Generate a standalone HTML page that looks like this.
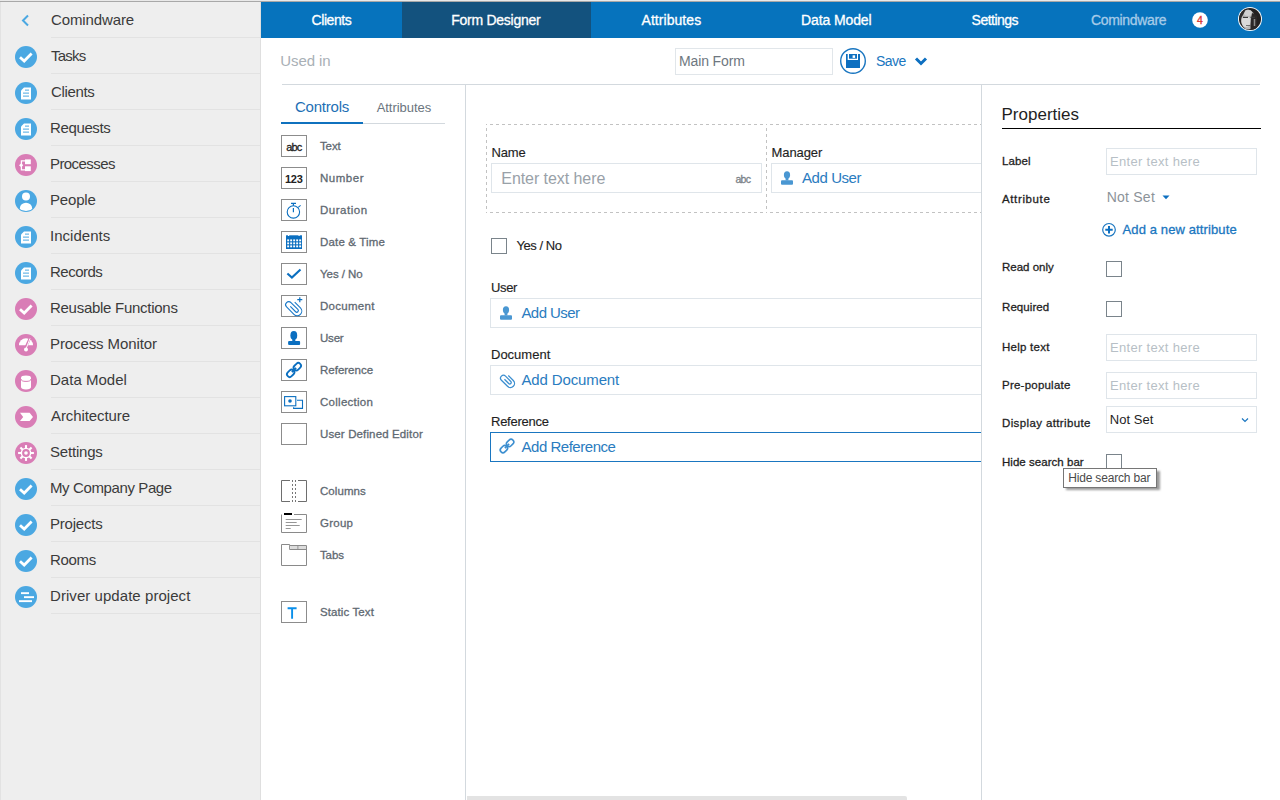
<!DOCTYPE html>
<html><head><meta charset="utf-8"><style>
html,body{margin:0;padding:0;width:1280px;height:800px;overflow:hidden;background:#fff}
body{position:relative;font-family:"Liberation Sans", sans-serif}
.t{position:absolute;line-height:1;white-space:nowrap}
svg{overflow:visible}
</style></head><body>
<div style="position:absolute;left:0px;top:0px;width:1280px;height:800px;background:#ffffff"></div>
<div style="position:absolute;left:0px;top:0px;width:261px;height:800px;background:#eeeeee"></div>
<div style="position:absolute;left:0px;top:0px;width:1px;height:800px;background:#e2e2e2"></div>
<div style="position:absolute;left:260px;top:0px;width:1px;height:800px;background:#dfdfdf"></div>
<div style="position:absolute;left:0px;top:0px;width:1280px;height:1px;background:#e9e9e9"></div>
<div style="position:absolute;left:0px;top:1px;width:1280px;height:1px;background:#a8a8a8"></div>
<svg style="position:absolute;left:18px;top:12px;" width="14" height="16" viewBox="0 0 14 16"><polyline points="10,3.5 5,8.5 10,13.5" fill="none" stroke="#4ba8e2" stroke-width="2"/></svg>
<svg style="position:absolute;left:15px;top:45.8px;" width="22" height="22" viewBox="0 0 22 22"><circle cx="11" cy="11" r="11" fill="#4ba8e2"/><polyline points="5,11.2 9.2,15 16.6,7.6" fill="none" stroke="#ffffff" stroke-width="2.8" stroke-linecap="butt"/></svg>
<svg style="position:absolute;left:15px;top:81.8px;" width="22" height="22" viewBox="0 0 22 22"><circle cx="11" cy="11" r="11" fill="#4ba8e2"/><path d="M9,5.5 H16 V17.5 H6 V8.5 Z" fill="#ffffff"/><rect x="10" y="7.6" width="4" height="1" fill="#4ba8e2"/><rect x="8" y="10.6" width="6" height="1" fill="#4ba8e2"/><rect x="8" y="13.6" width="6" height="1" fill="#4ba8e2"/></svg>
<svg style="position:absolute;left:15px;top:117.8px;" width="22" height="22" viewBox="0 0 22 22"><circle cx="11" cy="11" r="11" fill="#4ba8e2"/><path d="M9,5.5 H16 V17.5 H6 V8.5 Z" fill="#ffffff"/><rect x="10" y="7.6" width="4" height="1" fill="#4ba8e2"/><rect x="8" y="10.6" width="6" height="1" fill="#4ba8e2"/><rect x="8" y="13.6" width="6" height="1" fill="#4ba8e2"/></svg>
<svg style="position:absolute;left:15px;top:153.8px;" width="22" height="22" viewBox="0 0 22 22"><circle cx="11" cy="11" r="11" fill="#d97db6"/><rect x="10" y="5.4" width="5.8" height="4.8" fill="#ffffff"/><rect x="10" y="12.3" width="5.8" height="4.8" fill="#ffffff"/><path d="M10,6.8 H6.4 V15.8 H10" fill="none" stroke="#ffffff" stroke-width="1.3"/><path d="M4,11.2 L6.4,9.2 L8.2,11.2 L6.4,13.2 Z" fill="#ffffff"/></svg>
<svg style="position:absolute;left:15px;top:189.8px;" width="22" height="22" viewBox="0 0 22 22"><circle cx="11" cy="11" r="11" fill="#4ba8e2"/><circle cx="11" cy="6.4" r="4" fill="#ffffff"/><clipPath id="pc"><circle cx="11" cy="11" r="10.1"/></clipPath><ellipse cx="11" cy="18.3" rx="6.1" ry="5.6" fill="#ffffff" clip-path="url(#pc)"/></svg>
<svg style="position:absolute;left:15px;top:225.8px;" width="22" height="22" viewBox="0 0 22 22"><circle cx="11" cy="11" r="11" fill="#4ba8e2"/><path d="M9,5.5 H16 V17.5 H6 V8.5 Z" fill="#ffffff"/><rect x="10" y="7.6" width="4" height="1" fill="#4ba8e2"/><rect x="8" y="10.6" width="6" height="1" fill="#4ba8e2"/><rect x="8" y="13.6" width="6" height="1" fill="#4ba8e2"/></svg>
<svg style="position:absolute;left:15px;top:261.8px;" width="22" height="22" viewBox="0 0 22 22"><circle cx="11" cy="11" r="11" fill="#4ba8e2"/><path d="M9,5.5 H16 V17.5 H6 V8.5 Z" fill="#ffffff"/><rect x="10" y="7.6" width="4" height="1" fill="#4ba8e2"/><rect x="8" y="10.6" width="6" height="1" fill="#4ba8e2"/><rect x="8" y="13.6" width="6" height="1" fill="#4ba8e2"/></svg>
<svg style="position:absolute;left:15px;top:297.8px;" width="22" height="22" viewBox="0 0 22 22"><circle cx="11" cy="11" r="11" fill="#d97db6"/><polyline points="5,11.2 9.2,15 16.6,7.6" fill="none" stroke="#ffffff" stroke-width="2.8" stroke-linecap="butt"/></svg>
<svg style="position:absolute;left:15px;top:333.8px;" width="22" height="22" viewBox="0 0 22 22"><circle cx="11" cy="11" r="11" fill="#d97db6"/><path d="M4,11.3 A7,7 0 0 1 18,11.3 Z" fill="#ffffff"/><path d="M10.2,14.5 L15.2,3.5" stroke="#d97db6" stroke-width="2.4"/><path d="M11,15 L15,4.5" stroke="#ffffff" stroke-width="1"/><circle cx="11" cy="15.5" r="2" fill="#ffffff"/></svg>
<svg style="position:absolute;left:15px;top:369.8px;" width="22" height="22" viewBox="0 0 22 22"><circle cx="11" cy="11" r="11" fill="#d97db6"/><path d="M6,8 A5,2.4 0 0 1 16,8 V17 A5,2.4 0 0 1 6,17 Z" fill="#ffffff"/><path d="M6,9 A5,2.4 0 0 0 16,9" fill="none" stroke="#d97db6" stroke-width="1"/></svg>
<svg style="position:absolute;left:15px;top:405.8px;" width="22" height="22" viewBox="0 0 22 22"><circle cx="11" cy="11" r="11" fill="#d97db6"/><path d="M5,6.8 H14.6 L18,10.9 L14.6,15 H5 L8.2,10.9 Z" fill="#ffffff"/></svg>
<svg style="position:absolute;left:15px;top:441.8px;" width="22" height="22" viewBox="0 0 22 22"><circle cx="11" cy="11" r="11" fill="#d97db6"/><rect x="9.95" y="3.1" width="2.1" height="4" fill="#ffffff" transform="rotate(0 11 11)"/><rect x="9.95" y="3.1" width="2.1" height="4" fill="#ffffff" transform="rotate(45 11 11)"/><rect x="9.95" y="3.1" width="2.1" height="4" fill="#ffffff" transform="rotate(90 11 11)"/><rect x="9.95" y="3.1" width="2.1" height="4" fill="#ffffff" transform="rotate(135 11 11)"/><rect x="9.95" y="3.1" width="2.1" height="4" fill="#ffffff" transform="rotate(180 11 11)"/><rect x="9.95" y="3.1" width="2.1" height="4" fill="#ffffff" transform="rotate(225 11 11)"/><rect x="9.95" y="3.1" width="2.1" height="4" fill="#ffffff" transform="rotate(270 11 11)"/><rect x="9.95" y="3.1" width="2.1" height="4" fill="#ffffff" transform="rotate(315 11 11)"/><circle cx="11" cy="11" r="5.3" fill="#ffffff"/><circle cx="11" cy="11" r="3.9" fill="#d97db6"/><circle cx="11" cy="11" r="1.8" fill="#ffffff"/></svg>
<svg style="position:absolute;left:15px;top:477.8px;" width="22" height="22" viewBox="0 0 22 22"><circle cx="11" cy="11" r="11" fill="#4ba8e2"/><polyline points="5,11.2 9.2,15 16.6,7.6" fill="none" stroke="#ffffff" stroke-width="2.8" stroke-linecap="butt"/></svg>
<svg style="position:absolute;left:15px;top:513.8px;" width="22" height="22" viewBox="0 0 22 22"><circle cx="11" cy="11" r="11" fill="#4ba8e2"/><polyline points="5,11.2 9.2,15 16.6,7.6" fill="none" stroke="#ffffff" stroke-width="2.8" stroke-linecap="butt"/></svg>
<svg style="position:absolute;left:15px;top:549.8px;" width="22" height="22" viewBox="0 0 22 22"><circle cx="11" cy="11" r="11" fill="#4ba8e2"/><polyline points="5,11.2 9.2,15 16.6,7.6" fill="none" stroke="#ffffff" stroke-width="2.8" stroke-linecap="butt"/></svg>
<svg style="position:absolute;left:15px;top:585.8px;" width="22" height="22" viewBox="0 0 22 22"><circle cx="11" cy="11" r="11" fill="#4ba8e2"/><rect x="6" y="6.2" width="8" height="1.9" fill="#ffffff"/><rect x="9" y="10.2" width="10" height="1.9" fill="#ffffff"/><rect x="4" y="14.2" width="13" height="1.9" fill="#ffffff"/></svg>
<div style="position:absolute;left:51px;top:37px;width:209px;height:1px;background:#e2e2e2"></div>
<div style="position:absolute;left:51px;top:73px;width:209px;height:1px;background:#e2e2e2"></div>
<div style="position:absolute;left:51px;top:109px;width:209px;height:1px;background:#e2e2e2"></div>
<div style="position:absolute;left:51px;top:145px;width:209px;height:1px;background:#e2e2e2"></div>
<div style="position:absolute;left:51px;top:181px;width:209px;height:1px;background:#e2e2e2"></div>
<div style="position:absolute;left:51px;top:217px;width:209px;height:1px;background:#e2e2e2"></div>
<div style="position:absolute;left:51px;top:253px;width:209px;height:1px;background:#e2e2e2"></div>
<div style="position:absolute;left:51px;top:289px;width:209px;height:1px;background:#e2e2e2"></div>
<div style="position:absolute;left:51px;top:325px;width:209px;height:1px;background:#e2e2e2"></div>
<div style="position:absolute;left:51px;top:361px;width:209px;height:1px;background:#e2e2e2"></div>
<div style="position:absolute;left:51px;top:397px;width:209px;height:1px;background:#e2e2e2"></div>
<div style="position:absolute;left:51px;top:433px;width:209px;height:1px;background:#e2e2e2"></div>
<div style="position:absolute;left:51px;top:469px;width:209px;height:1px;background:#e2e2e2"></div>
<div style="position:absolute;left:51px;top:505px;width:209px;height:1px;background:#e2e2e2"></div>
<div style="position:absolute;left:51px;top:541px;width:209px;height:1px;background:#e2e2e2"></div>
<div style="position:absolute;left:51px;top:577px;width:209px;height:1px;background:#e2e2e2"></div>
<div style="position:absolute;left:51px;top:613px;width:209px;height:1px;background:#e2e2e2"></div>
<div style="position:absolute;left:261px;top:2px;width:1019px;height:36px;background:#0673bd"></div>
<div style="position:absolute;left:402px;top:2px;width:189px;height:36px;background:#13527e"></div>
<svg style="position:absolute;left:1192px;top:12.3px;" width="16" height="16" viewBox="0 0 16 16"><circle cx="8" cy="8" r="7.8" fill="#fff"/><text x="8" y="11.8" text-anchor="middle" font-family="Liberation Sans" font-size="10.5" stroke="#d9302c" stroke-width="0.3" fill="#d9302c">4</text></svg>
<svg style="position:absolute;left:1238px;top:7px;" width="24" height="24" viewBox="0 0 24 24"><clipPath id="avc"><circle cx="12" cy="12" r="11"/></clipPath><circle cx="12" cy="12" r="12" fill="#f4f8fb"/><circle cx="12" cy="12" r="11" fill="#232020"/><g clip-path="url(#avc)"><ellipse cx="10" cy="12.5" rx="7" ry="10" fill="#b9b9b9"/><ellipse cx="8" cy="14.5" rx="4.5" ry="5.5" fill="#dadada"/><ellipse cx="10" cy="6" rx="4" ry="3" fill="#d0d0d0"/><path d="M14,6 Q17,7 19,9 L19,24 L13,24 Q11.5,18 14,6 Z" fill="#2b2727"/><path d="M1,9 Q2,3 8,2 L5,8 Q3,10 3,14 Z" fill="#2f2d2d"/><path d="M5,10.3 H10 M12.5,10.3 H17" stroke="#3a3a3a" stroke-width="1.3"/><path d="M16.5,12 V19" stroke="#8a8a8a" stroke-width="1.5"/><path d="M8,18.5 H12" stroke="#555" stroke-width="0.8"/></g></svg>
<div style="position:absolute;left:675px;top:48px;width:158px;height:27px;border:1px solid #e1e6ea;box-sizing:border-box"></div>
<svg style="position:absolute;left:839px;top:47px;" width="28" height="28" viewBox="0 0 28 28"><circle cx="14" cy="14" r="12.3" fill="none" stroke="#1a76c0" stroke-width="1.4"/><rect x="7" y="7" width="14" height="14" fill="#0d6fc0"/><rect x="8.7" y="7" width="10.3" height="6" fill="#fff"/><rect x="10" y="7" width="8" height="4.7" fill="#0d6fc0"/><rect x="13.6" y="8.3" width="2.5" height="2.6" fill="#fff"/></svg>
<svg style="position:absolute;left:913px;top:55px;" width="16" height="12" viewBox="0 0 16 12"><polyline points="3,3.5 8,8.5 13,3.5" fill="none" stroke="#0d6fc0" stroke-width="3"/></svg>
<div style="position:absolute;left:282px;top:84px;width:978px;height:1px;background:#d3d9de"></div>
<div style="position:absolute;left:465px;top:85px;width:1px;height:715px;background:#d3d9de"></div>
<div style="position:absolute;left:981px;top:85px;width:1px;height:715px;background:#d3d9de"></div>
<div style="position:absolute;left:281px;top:122px;width:82px;height:2px;background:#0f71be"></div>
<div style="position:absolute;left:363px;top:123px;width:82px;height:1px;background:#d3d9de"></div>
<div style="position:absolute;left:281px;top:135px;width:26px;height:22px;border:1px solid #8c8c8c;box-sizing:border-box"></div>
<div style="position:absolute;left:281px;top:167px;width:26px;height:22px;border:1px solid #8c8c8c;box-sizing:border-box"></div>
<div style="position:absolute;left:281px;top:199px;width:26px;height:22px;border:1px solid #8c8c8c;box-sizing:border-box"></div>
<div style="position:absolute;left:281px;top:231px;width:26px;height:22px;border:1px solid #8c8c8c;box-sizing:border-box"></div>
<div style="position:absolute;left:281px;top:263px;width:26px;height:22px;border:1px solid #8c8c8c;box-sizing:border-box"></div>
<div style="position:absolute;left:281px;top:295px;width:26px;height:22px;border:1px solid #8c8c8c;box-sizing:border-box"></div>
<div style="position:absolute;left:281px;top:327px;width:26px;height:22px;border:1px solid #8c8c8c;box-sizing:border-box"></div>
<div style="position:absolute;left:281px;top:359px;width:26px;height:22px;border:1px solid #8c8c8c;box-sizing:border-box"></div>
<div style="position:absolute;left:281px;top:391px;width:26px;height:22px;border:1px solid #8c8c8c;box-sizing:border-box"></div>
<div style="position:absolute;left:281px;top:423px;width:26px;height:22px;border:1px solid #8c8c8c;box-sizing:border-box"></div>
<svg style="position:absolute;left:281px;top:199px;" width="26" height="22" viewBox="0 0 26 22"><circle cx="12.4" cy="12.9" r="6.2" fill="none" stroke="#0b6fc0" stroke-width="1.1"/><path d="M10,4.4 H15 M12.4,4.4 V6.7 M12.4,9 V13.3" stroke="#0b6fc0" stroke-width="1.2" fill="none"/><path d="M17.2,8.3 L19.6,6.3" stroke="#0b6fc0" stroke-width="1.1"/></svg>
<svg style="position:absolute;left:281px;top:231px;" width="26" height="22" viewBox="0 0 26 22"><rect x="5" y="4.3" width="16" height="13.7" fill="#0b6fc0"/><rect x="7" y="2.5" width="1.2" height="2.5" fill="#fff"/><rect x="17.5" y="2.5" width="1.2" height="2.5" fill="#fff"/><rect x="6.2" y="8.4" width="1.9" height="1.9" fill="#fff"/><rect x="6.2" y="11.4" width="1.9" height="1.9" fill="#fff"/><rect x="6.2" y="14.4" width="1.9" height="1.9" fill="#fff"/><rect x="9.2" y="8.4" width="1.9" height="1.9" fill="#fff"/><rect x="9.2" y="11.4" width="1.9" height="1.9" fill="#fff"/><rect x="9.2" y="14.4" width="1.9" height="1.9" fill="#fff"/><rect x="12.2" y="8.4" width="1.9" height="1.9" fill="#fff"/><rect x="12.2" y="11.4" width="1.9" height="1.9" fill="#fff"/><rect x="12.2" y="14.4" width="1.9" height="1.9" fill="#fff"/><rect x="15.2" y="8.4" width="1.9" height="1.9" fill="#fff"/><rect x="15.2" y="11.4" width="1.9" height="1.9" fill="#fff"/><rect x="15.2" y="14.4" width="1.9" height="1.9" fill="#fff"/><rect x="18.2" y="8.4" width="1.9" height="1.9" fill="#fff"/><rect x="18.2" y="11.4" width="1.9" height="1.9" fill="#fff"/><rect x="18.2" y="14.4" width="1.9" height="1.9" fill="#fff"/></svg>
<svg style="position:absolute;left:281px;top:263px;" width="26" height="22" viewBox="0 0 26 22"><polyline points="6.4,10.5 10.9,14.5 19.5,6.4" fill="none" stroke="#0b6fc0" stroke-width="2.1"/></svg>
<svg style="position:absolute;left:281px;top:295px;" width="26" height="22" viewBox="0 0 26 22"><g transform="rotate(-45 12.5 12.5)"><path d="M11,9.5 V17 A1.6,1.6 0 0 0 14.2,17 V7.2 A3.1,3.1 0 0 0 8,7.2 V17.6 A4.6,4.6 0 0 0 17.2,17.6 V9.5" fill="none" stroke="#1978c8" stroke-width="1.1"/></g><path d="M16.3,4.7 H21.3 M18.8,2.2 V7.2" stroke="#0b6fc0" stroke-width="1.2"/></svg>
<svg style="position:absolute;left:281px;top:327px;" width="26" height="22" viewBox="0 0 26 22"><ellipse cx="12.8" cy="8.5" rx="3.4" ry="4.4" fill="#0b6fc0"/><rect x="11.3" y="11" width="3" height="3.5" fill="#0b6fc0"/><rect x="7.1" y="14" width="12" height="4" rx="1" fill="#0b6fc0"/></svg>
<svg style="position:absolute;left:281px;top:359px;" width="26" height="22" viewBox="0 0 26 22"><g transform="rotate(-45 13 11)" fill="none" stroke="#0b6fc0" stroke-width="1.8"><rect x="4.2" y="8.3" width="8.2" height="5.4" rx="2.7"/><rect x="13.6" y="8.3" width="8.2" height="5.4" rx="2.7"/><path d="M10,11 H16"/></g></svg>
<svg style="position:absolute;left:281px;top:391px;" width="26" height="22" viewBox="0 0 26 22"><rect x="3.6" y="5.6" width="11.2" height="9.2" fill="none" stroke="#0b6fc0" stroke-width="1.1"/><circle cx="9" cy="10" r="1.8" fill="#0b6fc0"/><path d="M16,9.3 H21.5 V17.4 H12.6 V16.2" fill="none" stroke="#0b6fc0" stroke-width="1.1"/></svg>
<svg style="position:absolute;left:281px;top:479px;" width="26" height="24" viewBox="0 0 26 24"><path d="M9,1.5 H0.5 V22.5 H9 M17,1.5 H25.5 V22.5 H17" fill="none" stroke="#6e6e6e" stroke-width="1"/><path d="M11.5,1 V23 M14.5,1 V23" stroke="#777" stroke-width="1" stroke-dasharray="2,2"/></svg>
<svg style="position:absolute;left:281px;top:512px;" width="26" height="22" viewBox="0 0 26 22"><rect x="3" y="1" width="8" height="2" fill="#000"/><path d="M0.5,2.5 V20.5 H25.5 V2.5 H13" fill="none" stroke="#8a8a8a" stroke-width="1"/><path d="M4.7,7.5 H20.7 M4.7,10.5 H15.7 M4.7,13.5 H18.7 M4.7,16.5 H9.7" stroke="#8a8a8a" stroke-width="0.9"/></svg>
<svg style="position:absolute;left:281px;top:543px;" width="26" height="24" viewBox="0 0 26 24"><path d="M8.6,2.5 V1.5 H0.5 V22.5 H25.5 V2.5 H8.6 V6.5" fill="none" stroke="#8a8a8a" stroke-width="1"/><rect x="9.2" y="3" width="7.4" height="3" fill="#dcdcdc"/><rect x="17.2" y="3" width="7.8" height="3" fill="#dcdcdc"/><path d="M8.6,6.5 H25.5 M16.9,2.5 V6.5" stroke="#8a8a8a" stroke-width="1"/></svg>
<div style="position:absolute;left:281px;top:601px;width:26px;height:22px;border:1px solid #8c8c8c;box-sizing:border-box"></div>
<svg style="position:absolute;left:281px;top:601px;" width="26" height="22" viewBox="0 0 26 22"><path d="M6.6,7.2 H15.6 M11.1,7.2 V17.7" stroke="#0a8fea" stroke-width="1.9" fill="none"/></svg>
<div style="position:absolute;left:486px;top:124px;width:280px;height:1px;background:repeating-linear-gradient(90deg,#c2c2c2 0 1px,transparent 1px 4px,#c2c2c2 4px 6px)"></div>
<div style="position:absolute;left:766px;top:124px;width:215px;height:1px;background:repeating-linear-gradient(90deg,#c2c2c2 0 1px,transparent 1px 4px,#c2c2c2 4px 6px)"></div>
<div style="position:absolute;left:486px;top:212px;width:280px;height:1px;background:repeating-linear-gradient(90deg,#c2c2c2 0 1px,transparent 1px 4px,#c2c2c2 4px 6px)"></div>
<div style="position:absolute;left:766px;top:212px;width:215px;height:1px;background:repeating-linear-gradient(90deg,#c2c2c2 0 1px,transparent 1px 4px,#c2c2c2 4px 6px)"></div>
<div style="position:absolute;left:486px;top:124px;width:1px;height:89px;background:repeating-linear-gradient(180deg,#c2c2c2 0 1px,transparent 1px 4px,#c2c2c2 4px 6px)"></div>
<div style="position:absolute;left:766px;top:124px;width:1px;height:89px;background:repeating-linear-gradient(180deg,#c2c2c2 0 1px,transparent 1px 4px,#c2c2c2 4px 6px)"></div>
<div style="position:absolute;left:491px;top:163px;width:271px;height:30px;border:1px solid #dfe5ea;box-sizing:border-box"></div>
<div style="position:absolute;left:771px;top:163px;width:210px;height:30px;border:1px solid #dfe5ea;border-right:none;box-sizing:border-box"></div>
<svg style="position:absolute;left:780px;top:171px;" width="14" height="15" viewBox="0 0 14 15"><ellipse cx="7" cy="3.9" rx="3.1" ry="3.7" fill="#4a97d2"/><rect x="5.6" y="6" width="2.8" height="3.5" fill="#4a97d2"/><rect x="1" y="9.2" width="12" height="4.6" rx="1" fill="#4a97d2"/></svg>
<div style="position:absolute;left:491px;top:238px;width:16px;height:16px;border:1px solid #7a848b;box-sizing:border-box"></div>
<div style="position:absolute;left:490px;top:298px;width:491px;height:30px;border:1px solid #dfe5ea;border-right:none;box-sizing:border-box"></div>
<svg style="position:absolute;left:499px;top:306px;" width="14" height="15" viewBox="0 0 14 15"><ellipse cx="7" cy="3.9" rx="3.1" ry="3.7" fill="#4a97d2"/><rect x="5.6" y="6" width="2.8" height="3.5" fill="#4a97d2"/><rect x="1" y="9.2" width="12" height="4.6" rx="1" fill="#4a97d2"/></svg>
<div style="position:absolute;left:490px;top:365px;width:491px;height:30px;border:1px solid #dfe5ea;border-right:none;box-sizing:border-box"></div>
<svg style="position:absolute;left:499px;top:372px;" width="17" height="17" viewBox="0 0 17 17"><g transform="rotate(-45 8.5 8.5)"><path d="M7.2,5.5 V11.5 A1.5,1.5 0 0 0 10.2,11.5 V4 A2.9,2.9 0 0 0 4.4,4 V12.6 A4.1,4.1 0 0 0 12.6,12.6 V5.5" fill="none" stroke="#3d8fd0" stroke-width="1.3"/></g></svg>
<div style="position:absolute;left:490px;top:432px;width:491px;height:30px;border:1px solid #1a76c0;border-right:none;box-sizing:border-box"></div>
<svg style="position:absolute;left:497px;top:436px;" width="20" height="20" viewBox="0 0 20 20"><g transform="rotate(-45 10 10)" fill="none" stroke="#3d8fd0" stroke-width="1.6"><rect x="1.6" y="7.3" width="8" height="5.4" rx="2.7"/><rect x="10.4" y="7.3" width="8" height="5.4" rx="2.7"/><path d="M7,10 H13"/></g></svg>
<div style="position:absolute;left:467px;top:796px;width:440px;height:4px;background:#e3e3e3;border-radius:0 2px 0 0"></div>
<div style="position:absolute;left:1002px;top:128px;width:259px;height:1px;background:#000"></div>
<div style="position:absolute;left:1106px;top:148px;width:151px;height:27px;border:1px solid #dfe5ea;box-sizing:border-box"></div>
<svg style="position:absolute;left:1162px;top:195px;" width="8" height="5" viewBox="0 0 8 5"><path d="M0.5,0.5 H7.5 L4,4.3 Z" fill="#0d6fc0"/></svg>
<svg style="position:absolute;left:1101px;top:222px;" width="16" height="16" viewBox="0 0 16 16"><circle cx="8" cy="7.8" r="6.3" fill="none" stroke="#1a76c0" stroke-width="1.2"/><path d="M4.3,7.8 H11.7 M8,4.1 V11.5" stroke="#0d6fc0" stroke-width="2"/></svg>
<div style="position:absolute;left:1106px;top:261px;width:16px;height:16px;border:1px solid #7a848b;box-sizing:border-box"></div>
<div style="position:absolute;left:1106px;top:301px;width:16px;height:16px;border:1px solid #7a848b;box-sizing:border-box"></div>
<div style="position:absolute;left:1106px;top:334px;width:151px;height:27px;border:1px solid #dfe5ea;box-sizing:border-box"></div>
<div style="position:absolute;left:1106px;top:372px;width:151px;height:27px;border:1px solid #dfe5ea;box-sizing:border-box"></div>
<div style="position:absolute;left:1106px;top:406px;width:151px;height:27px;border:1px solid #dfe5ea;box-sizing:border-box"></div>
<svg style="position:absolute;left:1241px;top:417px;" width="8" height="6" viewBox="0 0 8 6"><polyline points="1,1.5 4,4.5 7,1.5" fill="none" stroke="#1a76c0" stroke-width="1.2"/></svg>
<div style="position:absolute;left:1106px;top:454px;width:16px;height:16px;border:1px solid #7a848b;box-sizing:border-box"></div>
<div style="position:absolute;left:1066px;top:471px;width:94px;height:19px;background:#9a9a9a;filter:blur(1px)"></div>
<div style="position:absolute;left:1063px;top:468px;width:94px;height:20px;background:#fff;border:1px solid #767676;box-sizing:border-box"></div>
<div class="t" style="left:51.00px;top:12.30px;font-size:15px;color:#3b3b3b;font-weight:400;letter-spacing:-0.111px">Comindware</div>
<div class="t" style="left:51.00px;top:48.30px;font-size:15px;color:#3b3b3b;font-weight:400;letter-spacing:-0.750px">Tasks</div>
<div class="t" style="left:51.00px;top:84.30px;font-size:15px;color:#3b3b3b;font-weight:400;letter-spacing:-0.333px">Clients</div>
<div class="t" style="left:50.00px;top:120.30px;font-size:15px;color:#3b3b3b;font-weight:400;letter-spacing:-0.371px">Requests</div>
<div class="t" style="left:50.00px;top:156.30px;font-size:15px;color:#3b3b3b;font-weight:400;letter-spacing:-0.575px">Processes</div>
<div class="t" style="left:50.00px;top:192.30px;font-size:15px;color:#3b3b3b;font-weight:400;letter-spacing:-0.180px">People</div>
<div class="t" style="left:50.00px;top:228.30px;font-size:15px;color:#3b3b3b;font-weight:400;letter-spacing:0.025px">Incidents</div>
<div class="t" style="left:50.00px;top:264.30px;font-size:15px;color:#3b3b3b;font-weight:400;letter-spacing:-0.500px">Records</div>
<div class="t" style="left:50.00px;top:300.30px;font-size:15px;color:#3b3b3b;font-weight:400;letter-spacing:-0.276px">Reusable Functions</div>
<div class="t" style="left:50.00px;top:336.30px;font-size:15px;color:#3b3b3b;font-weight:400;letter-spacing:-0.100px">Process Monitor</div>
<div class="t" style="left:50.00px;top:372.30px;font-size:15px;color:#3b3b3b;font-weight:400;letter-spacing:0.022px">Data Model</div>
<div class="t" style="left:51.00px;top:408.30px;font-size:15px;color:#3b3b3b;font-weight:400;letter-spacing:-0.091px">Architecture</div>
<div class="t" style="left:50.00px;top:444.30px;font-size:15px;color:#3b3b3b;font-weight:400;letter-spacing:-0.200px">Settings</div>
<div class="t" style="left:50.00px;top:480.30px;font-size:15px;color:#3b3b3b;font-weight:400;letter-spacing:-0.386px">My Company Page</div>
<div class="t" style="left:50.00px;top:516.30px;font-size:15px;color:#3b3b3b;font-weight:400;letter-spacing:-0.200px">Projects</div>
<div class="t" style="left:50.00px;top:552.30px;font-size:15px;color:#3b3b3b;font-weight:400;letter-spacing:-0.300px">Rooms</div>
<div class="t" style="left:50.00px;top:588.30px;font-size:15px;color:#3b3b3b;font-weight:400;letter-spacing:0.055px">Driver update project</div>
<div class="t" style="left:311.50px;top:13.15px;font-size:14px;color:#ffffff;-webkit-text-stroke:0.3px #ffffff;letter-spacing:-0.417px">Clients</div>
<div class="t" style="left:451.30px;top:13.15px;font-size:14px;color:#ffffff;-webkit-text-stroke:0.3px #ffffff;letter-spacing:-0.275px">Form Designer</div>
<div class="t" style="left:641.50px;top:13.15px;font-size:14px;color:#ffffff;-webkit-text-stroke:0.3px #ffffff;letter-spacing:0.056px">Attributes</div>
<div class="t" style="left:801.00px;top:13.15px;font-size:14px;color:#ffffff;-webkit-text-stroke:0.3px #ffffff;letter-spacing:-0.111px">Data Model</div>
<div class="t" style="left:971.60px;top:13.15px;font-size:14px;color:#ffffff;-webkit-text-stroke:0.3px #ffffff;letter-spacing:-0.514px">Settings</div>
<div class="t" style="left:1091.00px;top:13.15px;font-size:14px;color:#a6cbe8;-webkit-text-stroke:0.3px #a6cbe8;letter-spacing:-0.333px">Comindware</div>
<div class="t" style="left:280.30px;top:53.30px;font-size:15px;color:#a9b0b6;font-weight:400;letter-spacing:-0.100px">Used in</div>
<div class="t" style="left:679.00px;top:54.35px;font-size:14px;color:#6e7780;font-weight:400;letter-spacing:-0.125px">Main Form</div>
<div class="t" style="left:876.00px;top:53.85px;font-size:14px;color:#1a76c0;font-weight:400;letter-spacing:-0.567px">Save</div>
<div class="t" style="left:295.00px;top:98.70px;font-size:15px;color:#1d6fb5;font-weight:400;letter-spacing:-0.229px">Controls</div>
<div class="t" style="left:376.70px;top:101.20px;font-size:13px;color:#6b757e;font-weight:400;letter-spacing:-0.050px">Attributes</div>
<div class="t" style="left:320.00px;top:141.27px;font-size:11.5px;color:#5f6972;-webkit-text-stroke:0.3px #5f6972;letter-spacing:-0.133px">Text</div>
<div class="t" style="left:320.00px;top:173.27px;font-size:11.5px;color:#5f6972;-webkit-text-stroke:0.3px #5f6972;letter-spacing:0.520px">Number</div>
<div class="t" style="left:320.00px;top:205.27px;font-size:11.5px;color:#5f6972;-webkit-text-stroke:0.3px #5f6972;letter-spacing:0.514px">Duration</div>
<div class="t" style="left:320.00px;top:237.27px;font-size:11.5px;color:#5f6972;-webkit-text-stroke:0.3px #5f6972;letter-spacing:0.160px">Date &amp; Time</div>
<div class="t" style="left:320.00px;top:269.27px;font-size:11.5px;color:#5f6972;-webkit-text-stroke:0.3px #5f6972;letter-spacing:-0.057px">Yes / No</div>
<div class="t" style="left:320.00px;top:301.27px;font-size:11.5px;color:#5f6972;-webkit-text-stroke:0.3px #5f6972;letter-spacing:0.286px">Document</div>
<div class="t" style="left:320.00px;top:333.27px;font-size:11.5px;color:#5f6972;-webkit-text-stroke:0.3px #5f6972;letter-spacing:-0.200px">User</div>
<div class="t" style="left:320.00px;top:365.27px;font-size:11.5px;color:#5f6972;-webkit-text-stroke:0.3px #5f6972;letter-spacing:0.000px">Reference</div>
<div class="t" style="left:320.00px;top:397.27px;font-size:11.5px;color:#5f6972;-webkit-text-stroke:0.3px #5f6972;letter-spacing:0.267px">Collection</div>
<div class="t" style="left:320.00px;top:429.27px;font-size:11.5px;color:#5f6972;-webkit-text-stroke:0.3px #5f6972;letter-spacing:0.133px">User Defined Editor</div>
<div class="t" style="left:320.00px;top:486.27px;font-size:11.5px;color:#5f6972;-webkit-text-stroke:0.3px #5f6972;letter-spacing:0.067px">Columns</div>
<div class="t" style="left:320.00px;top:518.27px;font-size:11.5px;color:#5f6972;-webkit-text-stroke:0.3px #5f6972;letter-spacing:0.250px">Group</div>
<div class="t" style="left:320.00px;top:550.27px;font-size:11.5px;color:#5f6972;-webkit-text-stroke:0.3px #5f6972;letter-spacing:-0.133px">Tabs</div>
<div class="t" style="left:320.00px;top:607.27px;font-size:11.5px;color:#5f6972;-webkit-text-stroke:0.3px #5f6972;letter-spacing:0.100px">Static Text</div>
<div class="t" style="left:286.20px;top:141.69px;font-size:11px;color:#222;-webkit-text-stroke:0.3px #222;letter-spacing:-0.800px">abc</div>
<div class="t" style="left:285.00px;top:173.69px;font-size:11px;color:#222;font-weight:700;letter-spacing:-0.250px">123</div>
<div class="t" style="left:491.50px;top:146.20px;font-size:13px;color:#1f1f1f;-webkit-text-stroke:0.15px #1f1f1f;letter-spacing:-0.167px">Name</div>
<div class="t" style="left:501.30px;top:170.56px;font-size:16px;color:#99a1a8;font-weight:400;letter-spacing:-0.064px">Enter text here</div>
<div class="t" style="left:735.50px;top:174.11px;font-size:10.5px;color:#7a8288;-webkit-text-stroke:0.3px #7a8288;letter-spacing:-0.750px">abc</div>
<div class="t" style="left:771.50px;top:146.00px;font-size:13px;color:#1f1f1f;-webkit-text-stroke:0.15px #1f1f1f;letter-spacing:-0.083px">Manager</div>
<div class="t" style="left:802.00px;top:170.30px;font-size:15px;color:#2a7cc0;font-weight:400;letter-spacing:-0.429px">Add User</div>
<div class="t" style="left:516.50px;top:239.00px;font-size:13px;color:#1f1f1f;-webkit-text-stroke:0.15px #1f1f1f;letter-spacing:-0.457px">Yes / No</div>
<div class="t" style="left:491.00px;top:280.90px;font-size:13px;color:#1f1f1f;-webkit-text-stroke:0.15px #1f1f1f;letter-spacing:-0.333px">User</div>
<div class="t" style="left:521.40px;top:304.90px;font-size:15px;color:#2a7cc0;font-weight:400;letter-spacing:-0.543px">Add User</div>
<div class="t" style="left:491.00px;top:348.00px;font-size:13px;color:#1f1f1f;-webkit-text-stroke:0.15px #1f1f1f;letter-spacing:0.000px">Document</div>
<div class="t" style="left:521.50px;top:372.00px;font-size:15px;color:#2a7cc0;font-weight:400;letter-spacing:-0.136px">Add Document</div>
<div class="t" style="left:491.00px;top:414.60px;font-size:13px;color:#1f1f1f;-webkit-text-stroke:0.15px #1f1f1f;letter-spacing:-0.250px">Reference</div>
<div class="t" style="left:521.50px;top:439.10px;font-size:15px;color:#2a7cc0;font-weight:400;letter-spacing:-0.475px">Add Reference</div>
<div class="t" style="left:1001.50px;top:105.81px;font-size:17px;color:#1f1f1f;font-weight:400;letter-spacing:0.011px">Properties</div>
<div class="t" style="left:1002.00px;top:156.17px;font-size:11.5px;color:#1f1f1f;-webkit-text-stroke:0.3px #1f1f1f;letter-spacing:0.125px">Label</div>
<div class="t" style="left:1110.00px;top:155.00px;font-size:13px;color:#b7bfc6;font-weight:400;letter-spacing:0.314px">Enter text here</div>
<div class="t" style="left:1002.00px;top:194.17px;font-size:11.5px;color:#1f1f1f;-webkit-text-stroke:0.3px #1f1f1f;letter-spacing:0.625px">Attribute</div>
<div class="t" style="left:1106.70px;top:189.95px;font-size:14px;color:#8c9399;font-weight:400;letter-spacing:0.233px">Not Set</div>
<div class="t" style="left:1122.50px;top:222.80px;font-size:13px;color:#1a76c0;-webkit-text-stroke:0.3px #1a76c0;letter-spacing:0.117px">Add a new attribute</div>
<div class="t" style="left:1002.00px;top:262.27px;font-size:11.5px;color:#1f1f1f;-webkit-text-stroke:0.3px #1f1f1f;letter-spacing:0.000px">Read only</div>
<div class="t" style="left:1002.00px;top:302.12px;font-size:11.5px;color:#1f1f1f;-webkit-text-stroke:0.3px #1f1f1f;letter-spacing:0.071px">Required</div>
<div class="t" style="left:1002.00px;top:342.17px;font-size:11.5px;color:#1f1f1f;-webkit-text-stroke:0.3px #1f1f1f;letter-spacing:0.250px">Help text</div>
<div class="t" style="left:1110.00px;top:341.00px;font-size:13px;color:#b7bfc6;font-weight:400;letter-spacing:0.314px">Enter text here</div>
<div class="t" style="left:1002.00px;top:380.27px;font-size:11.5px;color:#1f1f1f;-webkit-text-stroke:0.3px #1f1f1f;letter-spacing:0.227px">Pre-populate</div>
<div class="t" style="left:1110.00px;top:379.00px;font-size:13px;color:#b7bfc6;font-weight:400;letter-spacing:0.314px">Enter text here</div>
<div class="t" style="left:1002.00px;top:418.27px;font-size:11.5px;color:#1f1f1f;-webkit-text-stroke:0.3px #1f1f1f;letter-spacing:0.375px">Display attribute</div>
<div class="t" style="left:1109.80px;top:413.10px;font-size:13px;color:#1f1f1f;font-weight:400;letter-spacing:0.033px">Not Set</div>
<div class="t" style="left:1002.00px;top:456.97px;font-size:11.5px;color:#1f1f1f;-webkit-text-stroke:0.3px #1f1f1f;letter-spacing:0.036px">Hide search bar</div>
<div class="t" style="left:1068.20px;top:471.84px;font-size:12px;color:#4a4a4a;font-weight:400;letter-spacing:-0.171px">Hide search bar</div>
</body></html>
